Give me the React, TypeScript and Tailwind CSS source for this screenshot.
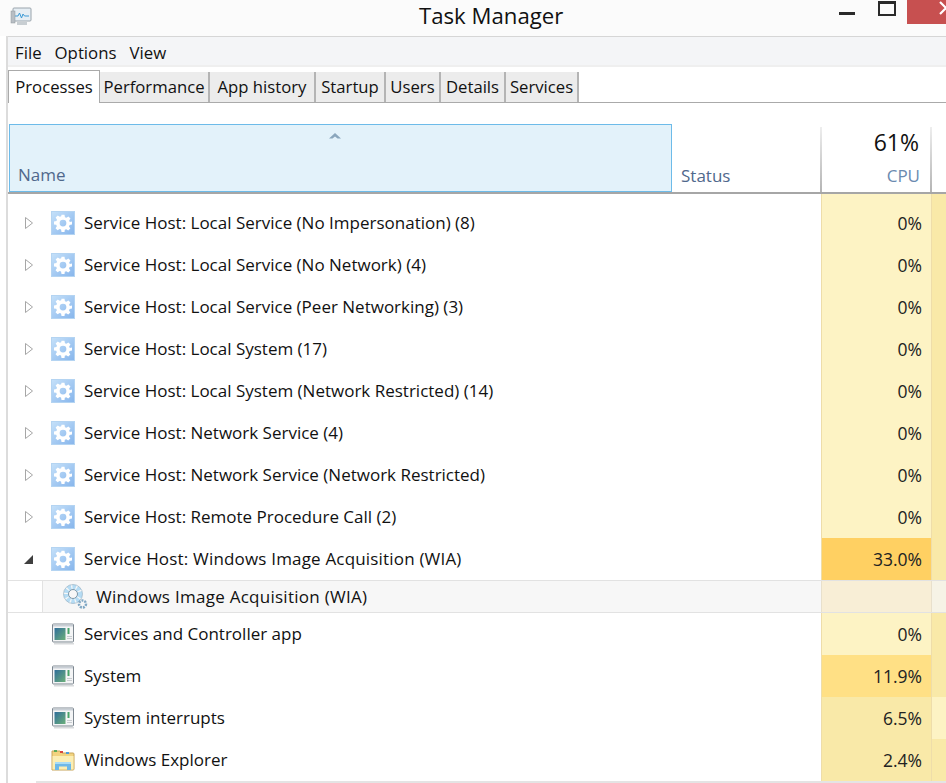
import React from "react";

const font = { fontFamily: '"Open Sans", "Noto Sans", sans-serif' };

function GearTile() {
  return (
    <div className="w-6 h-6 shrink-0 flex items-center justify-center border border-[#b4d4f2] bg-gradient-to-br from-[#c4e0f9] to-[#88b6ec]">
      <svg width="18" height="18" viewBox="0 0 24 24">
        <path
          fill="#fff"
          fillRule="evenodd"
          d="M10 1h4l.6 3.2 1.9.8 2.7-1.8 2.8 2.8-1.8 2.7.8 1.9L24 10v4l-3.2.6-.8 1.9 1.8 2.7-2.8 2.8-2.7-1.8-1.9.8L14 24h-4l-.6-3.2-1.9-.8-2.7 1.8-2.8-2.8 1.8-2.7-.8-1.9L0 14v-4l3.2-.6.8-1.9L2.2 4.800 5 2l2.700 1.800 1.900-.8zM12 7.500a4.500 4.500 0 1 0 0 9 4.500 4.500 0 0 0 0-9z"
        />
      </svg>
    </div>
  );
}

function AppIcon() {
  return (
    <svg width="24" height="22" viewBox="0 0 24 22" className="shrink-0">
      <defs>
        <linearGradient id="appg" x1="0" y1="0" x2="1" y2="1">
          <stop offset="0" stopColor="#2f6d9a" />
          <stop offset="1" stopColor="#6cb07a" />
        </linearGradient>
      </defs>
      <rect x="1.500" y="1" width="21" height="18" rx="1" fill="#f4f5f6" stroke="#7d8790" />
      <rect x="2" y="1.500" width="20" height="2" fill="#c9cfd6" />
      <rect x="3.500" y="5" width="11" height="12" fill="url(#appg)" />
      <rect x="16.500" y="5" width="2" height="6" fill="#4aa56a" />
      <rect x="16" y="13" width="5" height="1" fill="#c8ccd0" />
      <rect x="16" y="15" width="5" height="1" fill="#c8ccd0" />
      <rect x="3" y="20" width="20" height="1.500" fill="#d8dadc" />
    </svg>
  );
}

function FolderIcon() {
  return (
    <svg width="24" height="24" viewBox="0 0 24 24" className="shrink-0">
      <path d="M1 3h8l2 2h11a1 1 0 0 1 1 1v15a1 1 0 0 1-1 1H1z" fill="#f2d37e" stroke="#c6a45a" />
      <rect x="3" y="2" width="3" height="2" fill="#5aaa5a" />
      <rect x="9" y="3" width="3" height="2" fill="#d8453c" />
      <rect x="15" y="4" width="3" height="2" fill="#4a9ad8" />
      <rect x="1.500" y="8" width="21" height="13.500" fill="#fbeeb4" />
      <path d="M4 15h16v7h-4v-3.500H8V22H4z" fill="#6db8e8" />
      <rect x="4" y="14" width="16" height="2" fill="#a8dcf6" />
    </svg>
  );
}

function WiaIcon() {
  return (
    <svg width="26" height="26" viewBox="0 0 26 26" className="shrink-0">
      <circle cx="10" cy="10" r="7" fill="none" stroke="#b5dcf4" strokeWidth="5" strokeDasharray="3.400 1.200" />
      <circle cx="10" cy="10" r="4.500" fill="none" stroke="#7f97a8" strokeWidth="1" />
      <circle cx="10" cy="10" r="9.500" fill="none" stroke="#9fb4c4" strokeWidth="0.700" />
      <circle cx="19.500" cy="20" r="3.500" fill="none" stroke="#7fa7c4" strokeWidth="2.500" strokeDasharray="2 1" />
    </svg>
  );
}

const Tri = ({ open }: { open?: boolean }) => (
  <svg width="12" height="14" viewBox="0 0 12 14" className="shrink-0">
    {open ? (
      <path d="M10 3v9H1z" fill="#3f3f3f" />
    ) : (
      <path d="M2.500 1.500v11l7-5.500z" fill="#fff" stroke="#a6a6a6" />
    )}
  </svg>
);

type Row = { name: string; cpu: string; c: string; r: string; kind: "gear" | "app" | "folder"; arrow?: "c" | "o"; wide?: boolean };
const L = "bg-[#fdf3c4]";
const M = "bg-[#f9e9a8]";
const top: Row[] = [
  "Service Host: Local Service (No Impersonation) (8)",
  "Service Host: Local Service (No Network) (4)",
  "Service Host: Local Service (Peer Networking) (3)",
  "Service Host: Local System (17)",
  "Service Host: Local System (Network Restricted) (14)",
  "Service Host: Network Service (4)",
  "Service Host: Network Service (Network Restricted)",
  "Service Host: Remote Procedure Call (2)",
].map((name) => ({ name, cpu: "0%", c: L, r: M, kind: "gear", arrow: "c" }));

const tabs = [
  { t: "Performance", w: "w-[110px]" },
  { t: "App history", w: "w-[106px]" },
  { t: "Startup", w: "w-[70px]" },
  { t: "Users", w: "w-[55px]" },
  { t: "Details", w: "w-[65px]" },
  { t: "Services", w: "w-[73px]" },
];

function ProcRow({ row }: { row: Row }) {
  return (
    <div className="flex h-[42px] items-stretch">
      <div className="flex-1 flex items-center min-w-0">
        <div className="w-[43px] flex justify-end pr-[16px]">
          {row.arrow && <Tri open={row.arrow === "o"} />}
        </div>
        {row.kind === "gear" && <GearTile />}
        {row.kind === "app" && <AppIcon />}
        {row.kind === "folder" && <FolderIcon />}
        <span className={`ml-[9px] text-[17px] text-[#111] whitespace-nowrap ${row.wide ? "tracking-[0.18px]" : ""}`}>{row.name}</span>
      </div>
      <div className={`w-[110px] shrink-0 border-l border-[#eeddaa] flex items-center justify-end pr-[9px] text-[17.500px] text-[#222] ${row.c}`}>
        {row.cpu}
      </div>
      <div className={`w-[15px] shrink-0 border-l border-[#eeddaa] ${row.r}`} />
    </div>
  );
}

export default function App() {
  return (
    <div className="w-[946px] h-[783px] overflow-hidden bg-white flex flex-col" style={font}>
      <div className="h-[36px] shrink-0 bg-[#fbfbfb] flex items-start relative">
        <svg width="22" height="22" viewBox="0 0 22 22" className="ml-[10px] mt-[5px] shrink-0">
          <rect x="3" y="3" width="18" height="13" rx="1" fill="#e6eef4" stroke="#9aa4ac" />
          <path d="M5 11h3l1.500-3 2 5 1.500-4 1.500 2H19" fill="none" stroke="#3c9ad6" strokeWidth="1" />
          <rect x="1" y="6" width="4" height="12" fill="#b8bec4" stroke="#8e969c" strokeWidth="0.500" />
          <rect x="7" y="17" width="10" height="3" fill="#c8ced2" />
        </svg>
        <div className="ml-[387px] text-[22.200px] leading-[31px] text-[#111]">Task Manager</div>
        <div className="absolute right-0 top-0 h-6 flex items-start">
          <div className="w-[16px] h-[3px] bg-[#2a2a2a] mt-[12px] mr-[23px]" />
          <div className="w-[18px] h-[15px] border-2 border-t-[3px] border-[#2a2a2a] mt-[1px] mr-[11px]" />
          <div className="w-[39px] h-6 bg-[#c75050] flex items-start justify-end overflow-hidden">
            <svg width="14" height="14" viewBox="0 0 14 14" className="mt-[1px] -mr-[7px]">
              <path d="M1 1l12 12M13 1L1 13" stroke="#fff" strokeWidth="2.200" />
            </svg>
          </div>
        </div>
      </div>

      <div className="flex-1 flex flex-col border-l-2 border-[#dcdcdc] ml-[6px] min-h-0">
        <div className="h-[31px] shrink-0 bg-[#f4f5f7] border-t border-[#d6d6d6] border-b-2 border-b-[#efefef] flex items-center pl-[7px] pt-[3px] gap-[13px] text-[16.800px] text-[#111]">
          <span>File</span>
          <span>Options</span>
          <span>View</span>
        </div>

        <div className="h-[36px] shrink-0 border-b border-[#aaaaaa] flex items-end text-[16.700px] text-[#111]">
          <div className="h-[33px] w-[92px] -mb-px bg-white border border-b-0 border-[#aaaaaa] flex items-center justify-center z-10">Processes</div>
          {tabs.map((t) => (
            <div key={t.t} className={`h-[30px] bg-[#ececec] border-r-2 border-[#b4b4b4] flex items-center justify-center whitespace-nowrap ${t.w}`}>
              {t.t}
            </div>
          ))}
        </div>

        <div className="h-[21px] shrink-0" />

        <div className="h-[70px] shrink-0 flex items-stretch border-b-[2px] border-[#a6a6a6] text-[17px] text-[#50688c]">
          <div className="w-[663px] ml-px bg-[#e3f2fa] border border-[#6dbbe9] pl-[8px] pb-[4px] flex flex-col justify-between relative">
            <svg width="12" height="7" viewBox="0 0 12 7" className="mt-[7px] ml-[311px]">
              <path d="M0 6.500L6 1l6 5.500H8.500L6 4.500 3.500 6.500z" fill="#8aa6bc" />
            </svg>
            <span>Name</span>
          </div>
          <div className="w-[148px] pl-[9px] pb-[4px] flex items-end">Status</div>
          <div className="w-[2px] mt-[3px] bg-gradient-to-b from-[#eeeeee] to-[#b4b4b4]" />
          <div className="w-[108px] mt-[3px] pr-[10px] pb-[4px] flex flex-col items-end justify-between">
            <span className="text-[23px] leading-[30px] text-[#111] mr-px">61%</span>
            <span className="text-[#6b8ab0]">CPU</span>
          </div>
          <div className="w-[2px] mt-[3px] bg-gradient-to-b from-[#eeeeee] to-[#b4b4b4]" />
        </div>

        <div className="flex h-[8px] shrink-0">
          <div className="flex-1" />
          <div className={`w-[110px] border-l border-[#eeddaa] ${L}`} />
          <div className={`w-[15px] border-l border-[#eeddaa] ${M}`} />
        </div>

        {top.map((r) => (
          <ProcRow key={r.name} row={r} />
        ))}
        <ProcRow row={{ name: "Service Host: Windows Image Acquisition (WIA)", cpu: "33.0%", c: "bg-[#ffd062]", r: M, kind: "gear", arrow: "o", wide: true }} />

        <div className="h-[33px] shrink-0 flex border-y border-[#e2e2e2] items-stretch">
          <div className="flex-1 ml-[34px] bg-[#f7f7f7] border-l border-[#e2e2e2] flex items-center pl-[20px] pt-[1px] text-[17px] text-[#111]">
            <WiaIcon />
            <span className="ml-[7px] whitespace-nowrap tracking-[0.27px]">Windows Image Acquisition (WIA)</span>
          </div>
          <div className="w-[110px] border-l border-[#e8e0cc] bg-[#f8eed6]" />
          <div className="w-[15px] border-l border-[#e8e0cc] bg-[#f6f3e6]" />
        </div>

        <ProcRow row={{ name: "Services and Controller app", cpu: "0%", c: L, r: M, kind: "app" }} />
        <ProcRow row={{ name: "System", cpu: "11.9%", c: "bg-[#ffe085]", r: M, kind: "app" }} />
        <ProcRow row={{ name: "System interrupts", cpu: "6.5%", c: M, r: L, kind: "app" }} />
        <ProcRow row={{ name: "Windows Explorer", cpu: "2.4%", c: M, r: M, kind: "folder" }} />
        <div className="h-[2px] bg-[#e4e4e4] ml-[28px]" />
      </div>
    </div>
  );
}
